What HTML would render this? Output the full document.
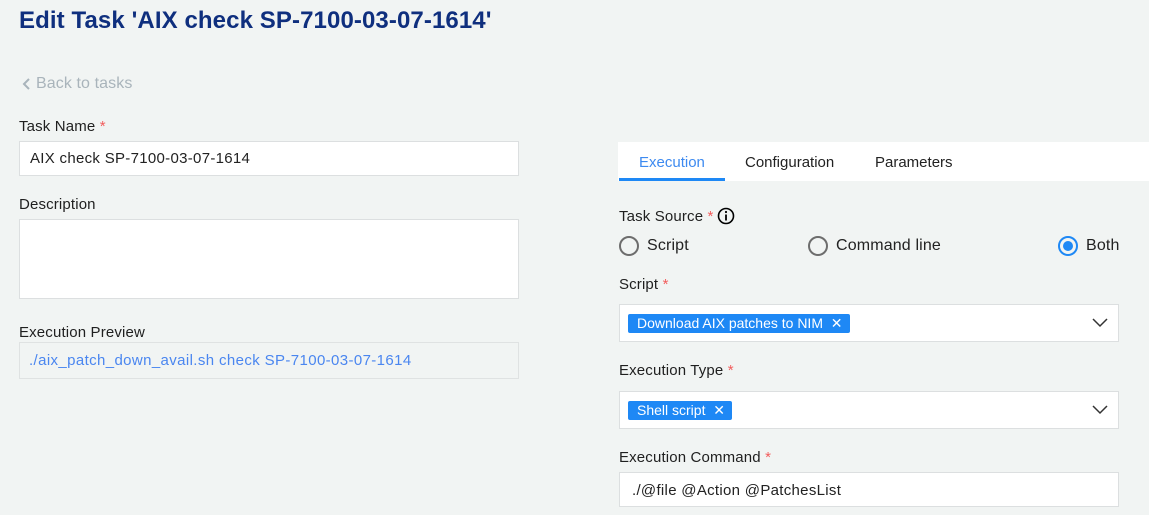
<!DOCTYPE html>
<html><head><meta charset="utf-8"><style>
*{box-sizing:border-box;margin:0;padding:0}
body{width:1149px;height:515px;background:#f1f4f3;font-family:"Liberation Sans",Arial,sans-serif;position:relative;overflow:hidden;color:#222}
.a{position:absolute;white-space:nowrap}
.lbl{font-size:15px;color:#1f1f1f;line-height:18px;letter-spacing:0.15px}
.req{color:#f25c5c}
.box{position:absolute;background:#fff;border:1px solid #dcdfe0}
.tag{position:absolute;background:#1e88f5;color:#fff;font-size:14px;line-height:19px;padding:0 7px 0 9px;border-radius:2px}
.radio{position:absolute;width:20px;height:20px;border:2px solid #6d6d6d;border-radius:50%}
.rt{font-size:16px;line-height:18px;color:#222;letter-spacing:0.15px}
</style></head><body>
<div class="a" style="left:19px;top:6px;font-size:24px;font-weight:bold;color:#0f2f7e;line-height:30px;letter-spacing:0.1px">Edit Task 'AIX check SP-7100-03-07-1614'</div>
<svg class="a" style="left:22px;top:78px" width="10" height="12"><path d="M7 1 L2 6 L7 11" stroke="#a9b4bb" stroke-width="2" fill="none"/></svg>
<div class="a" style="left:36px;top:75px;font-size:16px;color:#a9b4bb;line-height:18px;letter-spacing:0.1px">Back to tasks</div>

<div class="a lbl" style="left:19px;top:118px">Task Name <span class="req">*</span></div>
<div class="box" style="left:19px;top:141px;width:500px;height:35px"></div>
<div class="a" style="left:30px;top:150px;font-size:15px;line-height:18px;letter-spacing:0.3px">AIX check SP-7100-03-07-1614</div>

<div class="a lbl" style="left:19px;top:196px">Description</div>
<div class="box" style="left:19px;top:219px;width:500px;height:80px"></div>

<div class="a lbl" style="left:19px;top:324px">Execution Preview</div>
<div class="box" style="left:19px;top:342px;width:500px;height:37px;background:#f1f4f3;border-color:#dfe2e2"></div>
<div class="a" style="left:29px;top:352px;font-size:15px;line-height:18px;color:#4a86f0;letter-spacing:0.38px">./aix_patch_down_avail.sh check SP-7100-03-07-1614</div>

<div class="a" style="left:618px;top:142px;width:531px;height:39px;background:#fff"></div>
<div class="a" style="left:619px;top:178px;width:106px;height:3px;background:#1e88f5"></div>
<div class="a" style="left:639px;top:154px;font-size:15px;color:#3d8af0;line-height:18px">Execution</div>
<div class="a" style="left:745px;top:154px;font-size:15px;color:#222;line-height:18px">Configuration</div>
<div class="a" style="left:875px;top:154px;font-size:15px;color:#222;line-height:18px">Parameters</div>

<div class="a lbl" style="left:619px;top:208px">Task Source <span class="req">*</span></div>
<svg class="a" style="left:717px;top:207px" width="18" height="18"><circle cx="9" cy="9" r="7.5" stroke="#000" stroke-width="1.6" fill="none"/><rect x="8.1" y="7.5" width="1.8" height="6" fill="#000"/><circle cx="9" cy="5" r="1.1" fill="#000"/></svg>

<div class="radio" style="left:619px;top:236px"></div><div class="a rt" style="left:647px;top:237px">Script</div>
<div class="radio" style="left:808px;top:236px"></div><div class="a rt" style="left:836px;top:237px">Command line</div>
<div class="radio" style="left:1058px;top:236px;border-color:#1e88f5"><div style="position:absolute;left:3px;top:3px;width:10px;height:10px;border-radius:50%;background:#1e88f5"></div></div><div class="a rt" style="left:1086px;top:237px">Both</div>

<div class="a lbl" style="left:619px;top:276px">Script <span class="req">*</span></div>
<div class="box" style="left:619px;top:304px;width:500px;height:38px"></div>
<div class="tag" style="left:628px;top:314px">Download AIX patches to NIM&nbsp; <span style="font-weight:100">✕</span></div>
<svg class="a" style="left:1092px;top:318px" width="16" height="10"><path d="M1 1 L8 8 L15 1" stroke="#333" stroke-width="1.5" fill="none"/></svg>

<div class="a lbl" style="left:619px;top:362px">Execution Type <span class="req">*</span></div>
<div class="box" style="left:619px;top:391px;width:500px;height:38px"></div>
<div class="tag" style="left:628px;top:401px">Shell script&nbsp; <span>✕</span></div>
<svg class="a" style="left:1092px;top:405px" width="16" height="10"><path d="M1 1 L8 8 L15 1" stroke="#333" stroke-width="1.5" fill="none"/></svg>

<div class="a lbl" style="left:619px;top:449px">Execution Command <span class="req">*</span></div>
<div class="box" style="left:619px;top:472px;width:500px;height:35px"></div>
<div class="a" style="left:632px;top:482px;font-size:15px;line-height:18px;letter-spacing:0.3px">./@file @Action @PatchesList</div>
</body></html>
